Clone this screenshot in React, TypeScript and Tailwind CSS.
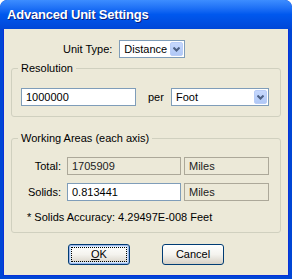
import React from 'react'

const ui = { fontFamily: '"Liberation Sans", Arial, sans-serif' }

function Chevron() {
  return (
    <svg width="7" height="5" viewBox="0 0 7 5">
      <path d="M0.5 0.5 L3.5 3.5 L6.5 0.5" fill="none" stroke="#4d6185" strokeWidth="2" />
    </svg>
  )
}

function Combo({ value, width }: { value: string; width: string }) {
  return (
    <div className={`${width} h-[18px] flex items-center border border-[#7f9db9] bg-white p-[1px]`}>
      <span className="flex-1 pl-[3px] leading-[13px]">{value}</span>
      <div className="w-[13px] h-full flex items-center justify-center rounded-[2px] bg-gradient-to-b from-[#c6d8fd] to-[#b0c8f6] border border-[#b9cdf7]">
        <Chevron />
      </div>
    </div>
  )
}

function Box({ value, width, disabled }: { value: string; width: string; disabled?: boolean }) {
  return (
    <div
      className={`${width} h-[18px] flex items-center pl-[4px] leading-[13px] border ${
        disabled ? 'border-[#aca899] bg-[#ece9d8] text-[#222]' : 'border-[#7f9db9] bg-white'
      }`}
    >
      {value}
    </div>
  )
}

function Group({ title, children, className }: { title: string; children: React.ReactNode; className?: string }) {
  return (
    <fieldset className={`mx-[7px] border border-[#d0d0bf] rounded-[3px] ${className ?? ''}`}>
      <legend className="ml-[6px] px-[3px] leading-[13px] text-[#000]">{title}</legend>
      {children}
    </fieldset>
  )
}

function Button({ label, primary }: { label: React.ReactNode; primary?: boolean }) {
  return (
    <button
      className={`w-[62px] h-[21px] rounded-[3px] border border-[#003c74] bg-gradient-to-b from-[#ffffff] via-[#f4f3ee] to-[#d6d0c5] p-[1px] ${
        primary ? 'shadow-[inset_0_0_0_1px_#9fb5e8,inset_0_0_0_2px_#cee7ff]' : ''
      }`}
    >
      <div className={`h-full flex items-center justify-center ${primary ? 'outline outline-1 outline-dotted outline-black -outline-offset-2' : ''}`}>
        {label}
      </div>
    </button>
  )
}

export default function App() {
  return (
    <div className="w-[292px] h-[279px] flex flex-col rounded-t-[7px] bg-[#0046d5] text-[11px] text-black overflow-hidden" style={ui}>
      <div className="h-[29px] flex items-center pl-[7px] pt-[1px] rounded-t-[7px] bg-gradient-to-b from-[#3d8dff] via-[#0058ee] to-[#0047d8]">
        <span className="text-[13px] font-bold text-white tracking-[-0.2px] [text-shadow:1px_1px_0_#0a1e7a]">
          Advanced Unit Settings
        </span>
      </div>

      <div className="flex-1 mx-[3px] mb-[3px] flex flex-col bg-[#ece9d8] border-l border-r border-b border-[#0831d9] -mt-[0px]">
        <div className="mt-[11px] h-[18px] flex items-center pl-[59px] gap-[7px]">
          <span>Unit Type:</span>
          <Combo value="Distance" width="w-[66px]" />
        </div>

        <Group title="Resolution" className="mt-[4px] pb-[10px]">
          <div className="mt-[13px] flex items-center pl-[9px] pr-[11px]">
            <Box value="1000000" width="w-[115px]" />
            <span className="ml-[12px]">per</span>
            <div className="ml-auto">
              <Combo value="Foot" width="w-[98px]" />
            </div>
          </div>
        </Group>

        <Group title="Working Areas (each axis)" className="mt-[15px] pb-[8px]">
          <div className="mt-[12px] flex flex-col gap-[8px]">
            <div className="flex items-center">
              <span className="w-[49px] text-right">Total:</span>
              <div className="ml-[6px]">
                <Box value="1705909" width="w-[114px]" disabled />
              </div>
              <div className="ml-[3px]">
                <Box value="Miles" width="w-[85px]" disabled />
              </div>
            </div>
            <div className="flex items-center">
              <span className="w-[49px] text-right">Solids:</span>
              <div className="ml-[6px]">
                <Box value="0.813441" width="w-[114px]" />
              </div>
              <div className="ml-[3px]">
                <Box value="Miles" width="w-[85px]" disabled />
              </div>
            </div>
          </div>
          <div className="mt-[10px] pl-[15px] leading-[13px]">* Solids Accuracy: 4.29497E-008 Feet</div>
        </Group>

        <div className="mt-[11px] flex pl-[64px] gap-[32px]">
          <Button
            primary
            label={
              <span>
                <span className="underline">O</span>K
              </span>
            }
          />
          <Button label="Cancel" />
        </div>
      </div>
    </div>
  )
}
